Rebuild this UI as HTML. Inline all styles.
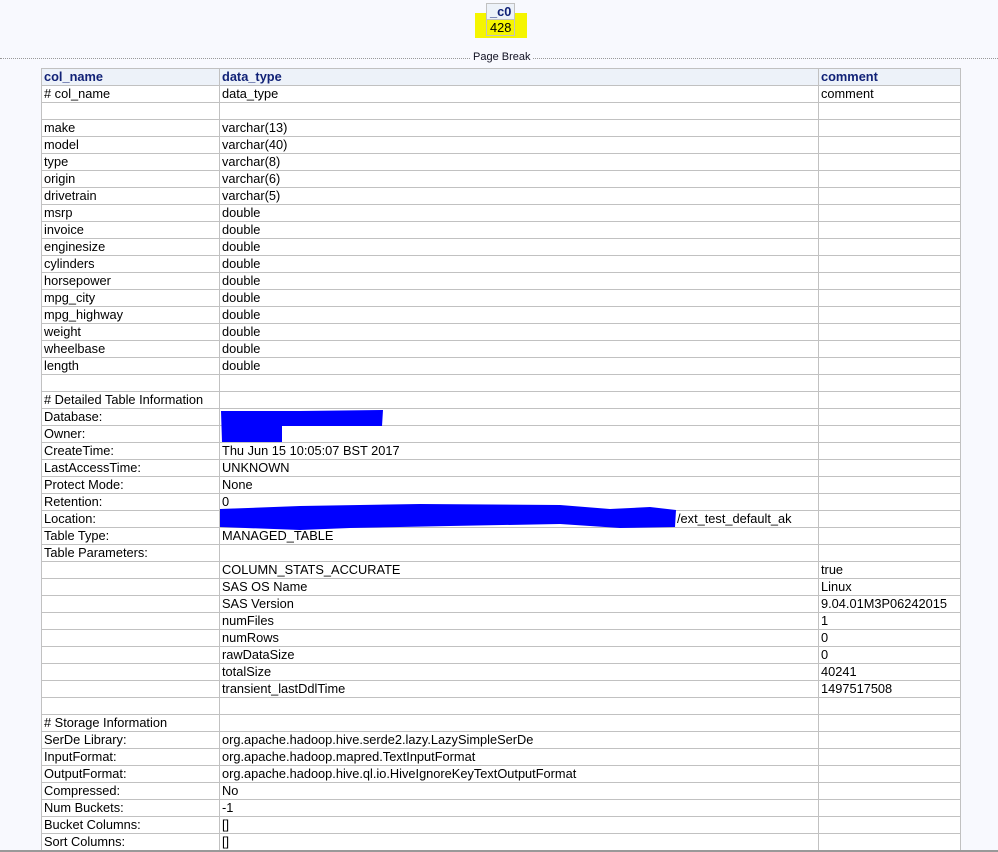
<!DOCTYPE html>
<html><head><meta charset="utf-8"><style>
body{margin:0;width:998px;height:852px;background:#f8f9fe;position:relative;overflow:hidden;font-family:"Liberation Sans",Arial,sans-serif;font-size:12.8px;color:#000}
.hl{position:absolute;left:475px;top:13px;width:52px;height:25px;background:#f5f500}
.c0{position:absolute;left:486px;top:3px;border-collapse:collapse}
.c0 td{border:1px solid #c1c1c1;height:15px;padding:0 3px;text-align:right;line-height:15px}
.pb{position:absolute;left:0;top:58px;width:998px;border-top:1px dotted #999}
.pbt{position:absolute;left:470px;top:51px;background:#f8f9fe;padding:0 3px;font-size:11px;color:#112}
table.m{position:absolute;left:41px;top:68px;border-collapse:collapse;table-layout:fixed;width:919px}
table.m td{border:1px solid #c1c1c1;height:16px;padding:0 0 0 2px;line-height:16px;white-space:nowrap;overflow:hidden;background:#fff}
table.m tr.h td{background:#edf2f9;color:#112277;font-weight:bold}
.bot{position:absolute;left:0;top:850px;width:998px;height:2px;background:#999}
</style></head><body>
<div class="hl"></div>
<table class="c0"><tr><td style="background:#edf2f9;color:#112277;font-weight:bold">_c0</td></tr><tr><td>428</td></tr></table>
<div class="pb"></div><div class="pbt">Page Break</div>
<table class="m">
<colgroup><col style="width:178px"><col style="width:599px"><col style="width:142px"></colgroup>
<tr class="h"><td>col_name</td><td>data_type</td><td>comment</td></tr>
<tr><td># col_name</td><td>data_type</td><td>comment</td></tr>
<tr><td></td><td></td><td></td></tr>
<tr><td>make</td><td>varchar(13)</td><td></td></tr>
<tr><td>model</td><td>varchar(40)</td><td></td></tr>
<tr><td>type</td><td>varchar(8)</td><td></td></tr>
<tr><td>origin</td><td>varchar(6)</td><td></td></tr>
<tr><td>drivetrain</td><td>varchar(5)</td><td></td></tr>
<tr><td>msrp</td><td>double</td><td></td></tr>
<tr><td>invoice</td><td>double</td><td></td></tr>
<tr><td>enginesize</td><td>double</td><td></td></tr>
<tr><td>cylinders</td><td>double</td><td></td></tr>
<tr><td>horsepower</td><td>double</td><td></td></tr>
<tr><td>mpg_city</td><td>double</td><td></td></tr>
<tr><td>mpg_highway</td><td>double</td><td></td></tr>
<tr><td>weight</td><td>double</td><td></td></tr>
<tr><td>wheelbase</td><td>double</td><td></td></tr>
<tr><td>length</td><td>double</td><td></td></tr>
<tr><td></td><td></td><td></td></tr>
<tr><td># Detailed Table Information</td><td></td><td></td></tr>
<tr><td>Database:</td><td></td><td></td></tr>
<tr><td>Owner:</td><td></td><td></td></tr>
<tr><td>CreateTime:</td><td>Thu Jun 15 10:05:07 BST 2017</td><td></td></tr>
<tr><td>LastAccessTime:</td><td>UNKNOWN</td><td></td></tr>
<tr><td>Protect Mode:</td><td>None</td><td></td></tr>
<tr><td>Retention:</td><td>0</td><td></td></tr>
<tr><td>Location:</td><td><span style="padding-left:455px">/ext_test_default_ak</span></td><td></td></tr>
<tr><td>Table Type:</td><td>MANAGED_TABLE</td><td></td></tr>
<tr><td>Table Parameters:</td><td></td><td></td></tr>
<tr><td></td><td>COLUMN_STATS_ACCURATE</td><td>true</td></tr>
<tr><td></td><td>SAS OS Name</td><td>Linux</td></tr>
<tr><td></td><td>SAS Version</td><td>9.04.01M3P06242015</td></tr>
<tr><td></td><td>numFiles</td><td>1</td></tr>
<tr><td></td><td>numRows</td><td>0</td></tr>
<tr><td></td><td>rawDataSize</td><td>0</td></tr>
<tr><td></td><td>totalSize</td><td>40241</td></tr>
<tr><td></td><td>transient_lastDdlTime</td><td>1497517508</td></tr>
<tr><td></td><td></td><td></td></tr>
<tr><td># Storage Information</td><td></td><td></td></tr>
<tr><td>SerDe Library:</td><td>org.apache.hadoop.hive.serde2.lazy.LazySimpleSerDe</td><td></td></tr>
<tr><td>InputFormat:</td><td>org.apache.hadoop.mapred.TextInputFormat</td><td></td></tr>
<tr><td>OutputFormat:</td><td>org.apache.hadoop.hive.ql.io.HiveIgnoreKeyTextOutputFormat</td><td></td></tr>
<tr><td>Compressed:</td><td>No</td><td></td></tr>
<tr><td>Num Buckets:</td><td>-1</td><td></td></tr>
<tr><td>Bucket Columns:</td><td>[]</td><td></td></tr>
<tr><td>Sort Columns:</td><td>[]</td><td></td></tr>
</table>
<svg style="position:absolute;left:0;top:0" width="998" height="852">
<path d="M221 411 L300 411 L383 410 L382 426 L282 426 L282 442 L222 442 Z" fill="#0000ff"/>
<path d="M220 509 L300 506 L420 504 L560 505 L610 509 L650 507 L676 510 L675 527 L620 528 L560 524 L450 526 L350 528 L300 530 L220 527 Z" fill="#0000ff"/>
</svg>
<div class="bot"></div>
</body></html>
